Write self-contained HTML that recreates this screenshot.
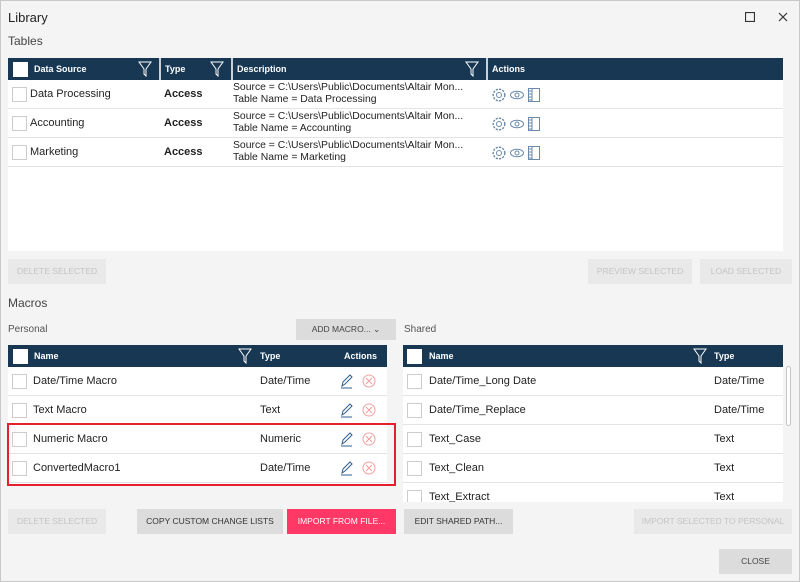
<!DOCTYPE html>
<html><head><style>
*{box-sizing:border-box;margin:0;padding:0}
body{width:800px;height:582px;overflow:hidden;background:#f4f4f4;font-family:"Liberation Sans",sans-serif;color:#222;position:relative}
.a{position:absolute}
.frame{left:0;top:0;width:800px;height:582px;border:1px solid #c8c8c8}
.t{font-size:11px;white-space:nowrap}
.hd{background:#173753;color:#fff;font-size:9px;font-weight:bold}
.cb{position:absolute;width:15px;height:15px;border:1px solid #ccc;background:#fff}
.hcb{position:absolute;width:15px;height:15px;background:#fff}
.row{position:absolute;border-bottom:1px solid #e3e3e3;height:29px}
.btn{position:absolute;font-size:8.5px;text-align:center;background:#e9e9e9;color:#c4c4c4;line-height:25px;white-space:nowrap}
.btn.on{background:#dcdcdc;color:#333}
.sep{position:absolute;top:0;width:2px;height:22px;background:#c9d0d8}
.desc{font-size:10.4px}
</style></head><body>
<div class="a frame"></div>
<div class="a" style="left:8px;top:10px;font-size:13px">Library</div>
<div class="a" style="left:8px;top:34px;font-size:12px;color:#444">Tables</div>
<svg class="a" style="left:745px;top:12px" width="10" height="10"><rect x="0.5" y="0.5" width="9" height="9" fill="none" stroke="#333" stroke-width="1.2"/></svg>
<svg class="a" style="left:778px;top:12px" width="10" height="10"><path d="M1 1L9 9M9 1L1 9" stroke="#333" stroke-width="1.2"/></svg>

<div class="a" style="left:8px;top:58px;width:775px;height:193px;background:#fff"></div>
<div class="a hd" style="left:8px;top:58px;width:775px;height:22px">
  <div class="hcb" style="left:5px;top:4px"></div>
  <div class="a" style="left:26px;top:6px">Data Source</div>
  <svg class="a" style="left:130px;top:3px" width="14" height="16"><path d="M1 1H13L8 8V15L6 13V8Z" fill="none" stroke="#fff" stroke-width="1"/></svg>
  <div class="sep" style="left:151px"></div>
  <div class="a" style="left:157px;top:6px">Type</div>
  <svg class="a" style="left:202px;top:3px" width="14" height="16"><path d="M1 1H13L8 8V15L6 13V8Z" fill="none" stroke="#fff" stroke-width="1"/></svg>
  <div class="sep" style="left:223px"></div>
  <div class="a" style="left:229px;top:6px">Description</div>
  <svg class="a" style="left:457px;top:3px" width="14" height="16"><path d="M1 1H13L8 8V15L6 13V8Z" fill="none" stroke="#fff" stroke-width="1"/></svg>
  <div class="sep" style="left:478px"></div>
  <div class="a" style="left:484px;top:6px">Actions</div>
</div>
<div class="row" style="left:8px;top:80px;width:775px">
  <div class="cb" style="left:4px;top:7px"></div><div class="a t" style="left:22px;top:8px">Data Processing</div>
  <div class="a t" style="left:156px;top:8px;font-weight:bold">Access</div>
  <div class="a t desc" style="left:225px;top:2px;line-height:12px">Source = C:\Users\Public\Documents\Altair Mon...<br>Table Name = Data Processing</div>
</div>
<div class="row" style="left:8px;top:109px;width:775px">
  <div class="cb" style="left:4px;top:7px"></div><div class="a t" style="left:22px;top:8px">Accounting</div>
  <div class="a t" style="left:156px;top:8px;font-weight:bold">Access</div>
  <div class="a t desc" style="left:225px;top:2px;line-height:12px">Source = C:\Users\Public\Documents\Altair Mon...<br>Table Name = Accounting</div>
</div>
<div class="row" style="left:8px;top:138px;width:775px">
  <div class="cb" style="left:4px;top:7px"></div><div class="a t" style="left:22px;top:8px">Marketing</div>
  <div class="a t" style="left:156px;top:8px;font-weight:bold">Access</div>
  <div class="a t desc" style="left:225px;top:2px;line-height:12px">Source = C:\Users\Public\Documents\Altair Mon...<br>Table Name = Marketing</div>
</div>
<svg class="a" style="left:492px;top:87px" width="52" height="80">
  <g id="ic" fill="none" stroke="#6a8aab" stroke-width="1">
    <circle cx="7" cy="8" r="2.5"/><circle cx="7" cy="8" r="5.8" stroke-dasharray="2.2 1.2" stroke-width="1.4"/>
    <ellipse cx="25" cy="8" rx="6.5" ry="3.8"/><circle cx="25" cy="8" r="2"/>
    <rect x="36.5" y="1.5" width="11" height="13"/><path d="M40 1.5V14.5M36.5 4H40M36.5 7H40M36.5 10H40M36.5 13H40"/>
  </g>
  <use href="#ic" y="29"/><use href="#ic" y="58"/>
</svg>

<div class="btn" style="left:8px;top:259px;width:98px">DELETE SELECTED</div>
<div class="btn" style="left:588px;top:259px;width:104px">PREVIEW SELECTED</div>
<div class="btn" style="left:700px;top:259px;width:92px">LOAD SELECTED</div>

<div class="a" style="left:8px;top:296px;font-size:12px;color:#444">Macros</div>
<div class="a" style="left:8px;top:324px;font-size:10px;color:#555">Personal</div>
<div class="btn on" style="left:296px;top:319px;width:100px;height:21px;line-height:21px;color:#444">ADD MACRO... &#8964;</div>
<div class="a" style="left:404px;top:324px;font-size:10px;color:#555">Shared</div>

<div class="a" style="left:8px;top:345px;width:379px;height:139px;background:#fff"></div>
<div class="a hd" style="left:8px;top:345px;width:379px;height:22px">
  <div class="hcb" style="left:5px;top:4px"></div>
  <div class="a" style="left:26px;top:6px">Name</div>
  <svg class="a" style="left:230px;top:3px" width="14" height="16"><path d="M1 1H13L8 8V15L6 13V8Z" fill="none" stroke="#fff" stroke-width="1"/></svg>
  <div class="a" style="left:252px;top:6px">Type</div>
  <div class="a" style="left:336px;top:6px">Actions</div>
</div>
<div class="row" style="left:8px;top:367px;width:379px"><div class="cb" style="left:4px;top:7px"></div><div class="a t" style="left:25px;top:8px">Date/Time Macro</div><div class="a t" style="left:252px;top:8px">Date/Time</div></div>
<div class="row" style="left:8px;top:396px;width:379px"><div class="cb" style="left:4px;top:7px"></div><div class="a t" style="left:25px;top:8px">Text Macro</div><div class="a t" style="left:252px;top:8px">Text</div></div>
<div class="row" style="left:8px;top:425px;width:379px"><div class="cb" style="left:4px;top:7px"></div><div class="a t" style="left:25px;top:8px">Numeric Macro</div><div class="a t" style="left:252px;top:8px">Numeric</div></div>
<div class="row" style="left:8px;top:454px;width:379px"><div class="cb" style="left:4px;top:7px"></div><div class="a t" style="left:25px;top:8px">ConvertedMacro1</div><div class="a t" style="left:252px;top:8px">Date/Time</div></div>
<svg class="a" style="left:340px;top:373px" width="40" height="104">
  <g id="ed"><path d="M2 13L3 9L10 2L12 4L5 11Z M1 15H12" fill="none" stroke="#2f5f8f" stroke-width="1"/>
  <circle cx="29" cy="8" r="6" fill="none" stroke="#f0a0a0" stroke-width="1"/><path d="M26 5L32 11M32 5L26 11" stroke="#f0a0a0" stroke-width="1"/></g>
  <use href="#ed" y="29"/><use href="#ed" y="58"/><use href="#ed" y="87"/>
</svg>
<div class="a" style="left:7px;top:423px;width:389px;height:63px;border:2px solid #e5202e"></div>

<div class="a" style="left:403px;top:345px;width:380px;height:157px;background:#fff;overflow:hidden">
<div class="a hd" style="left:0;top:0;width:380px;height:22px">
  <div class="hcb" style="left:4px;top:4px"></div>
  <div class="a" style="left:26px;top:6px">Name</div>
  <svg class="a" style="left:290px;top:3px" width="14" height="16"><path d="M1 1H13L8 8V15L6 13V8Z" fill="none" stroke="#fff" stroke-width="1"/></svg>
  <div class="a" style="left:311px;top:6px">Type</div>
</div>
<div class="row" style="left:0;top:22px;width:380px"><div class="cb" style="left:4px;top:7px"></div><div class="a t" style="left:26px;top:8px">Date/Time_Long Date</div><div class="a t" style="left:311px;top:8px">Date/Time</div></div>
<div class="row" style="left:0;top:51px;width:380px"><div class="cb" style="left:4px;top:7px"></div><div class="a t" style="left:26px;top:8px">Date/Time_Replace</div><div class="a t" style="left:311px;top:8px">Date/Time</div></div>
<div class="row" style="left:0;top:80px;width:380px"><div class="cb" style="left:4px;top:7px"></div><div class="a t" style="left:26px;top:8px">Text_Case</div><div class="a t" style="left:311px;top:8px">Text</div></div>
<div class="row" style="left:0;top:109px;width:380px"><div class="cb" style="left:4px;top:7px"></div><div class="a t" style="left:26px;top:8px">Text_Clean</div><div class="a t" style="left:311px;top:8px">Text</div></div>
<div class="row" style="left:0;top:138px;width:380px"><div class="cb" style="left:4px;top:7px"></div><div class="a t" style="left:26px;top:8px">Text_Extract</div><div class="a t" style="left:311px;top:8px">Text</div></div>
</div>
<div class="a" style="left:786px;top:366px;width:5px;height:60px;border:1px solid #c4c4c4;border-radius:3px;background:#fff"></div>

<div class="btn" style="left:8px;top:509px;width:98px">DELETE SELECTED</div>
<div class="btn on" style="left:137px;top:509px;width:146px">COPY CUSTOM CHANGE LISTS</div>
<div class="btn on" style="left:287px;top:509px;width:109px;background:#ff3866;color:#fff">IMPORT FROM FILE...</div>
<div class="btn on" style="left:404px;top:509px;width:109px">EDIT SHARED PATH...</div>
<div class="btn" style="left:634px;top:509px;width:158px">IMPORT SELECTED TO PERSONAL</div>
<div class="btn on" style="left:719px;top:549px;width:73px;color:#444">CLOSE</div>
</body></html>
